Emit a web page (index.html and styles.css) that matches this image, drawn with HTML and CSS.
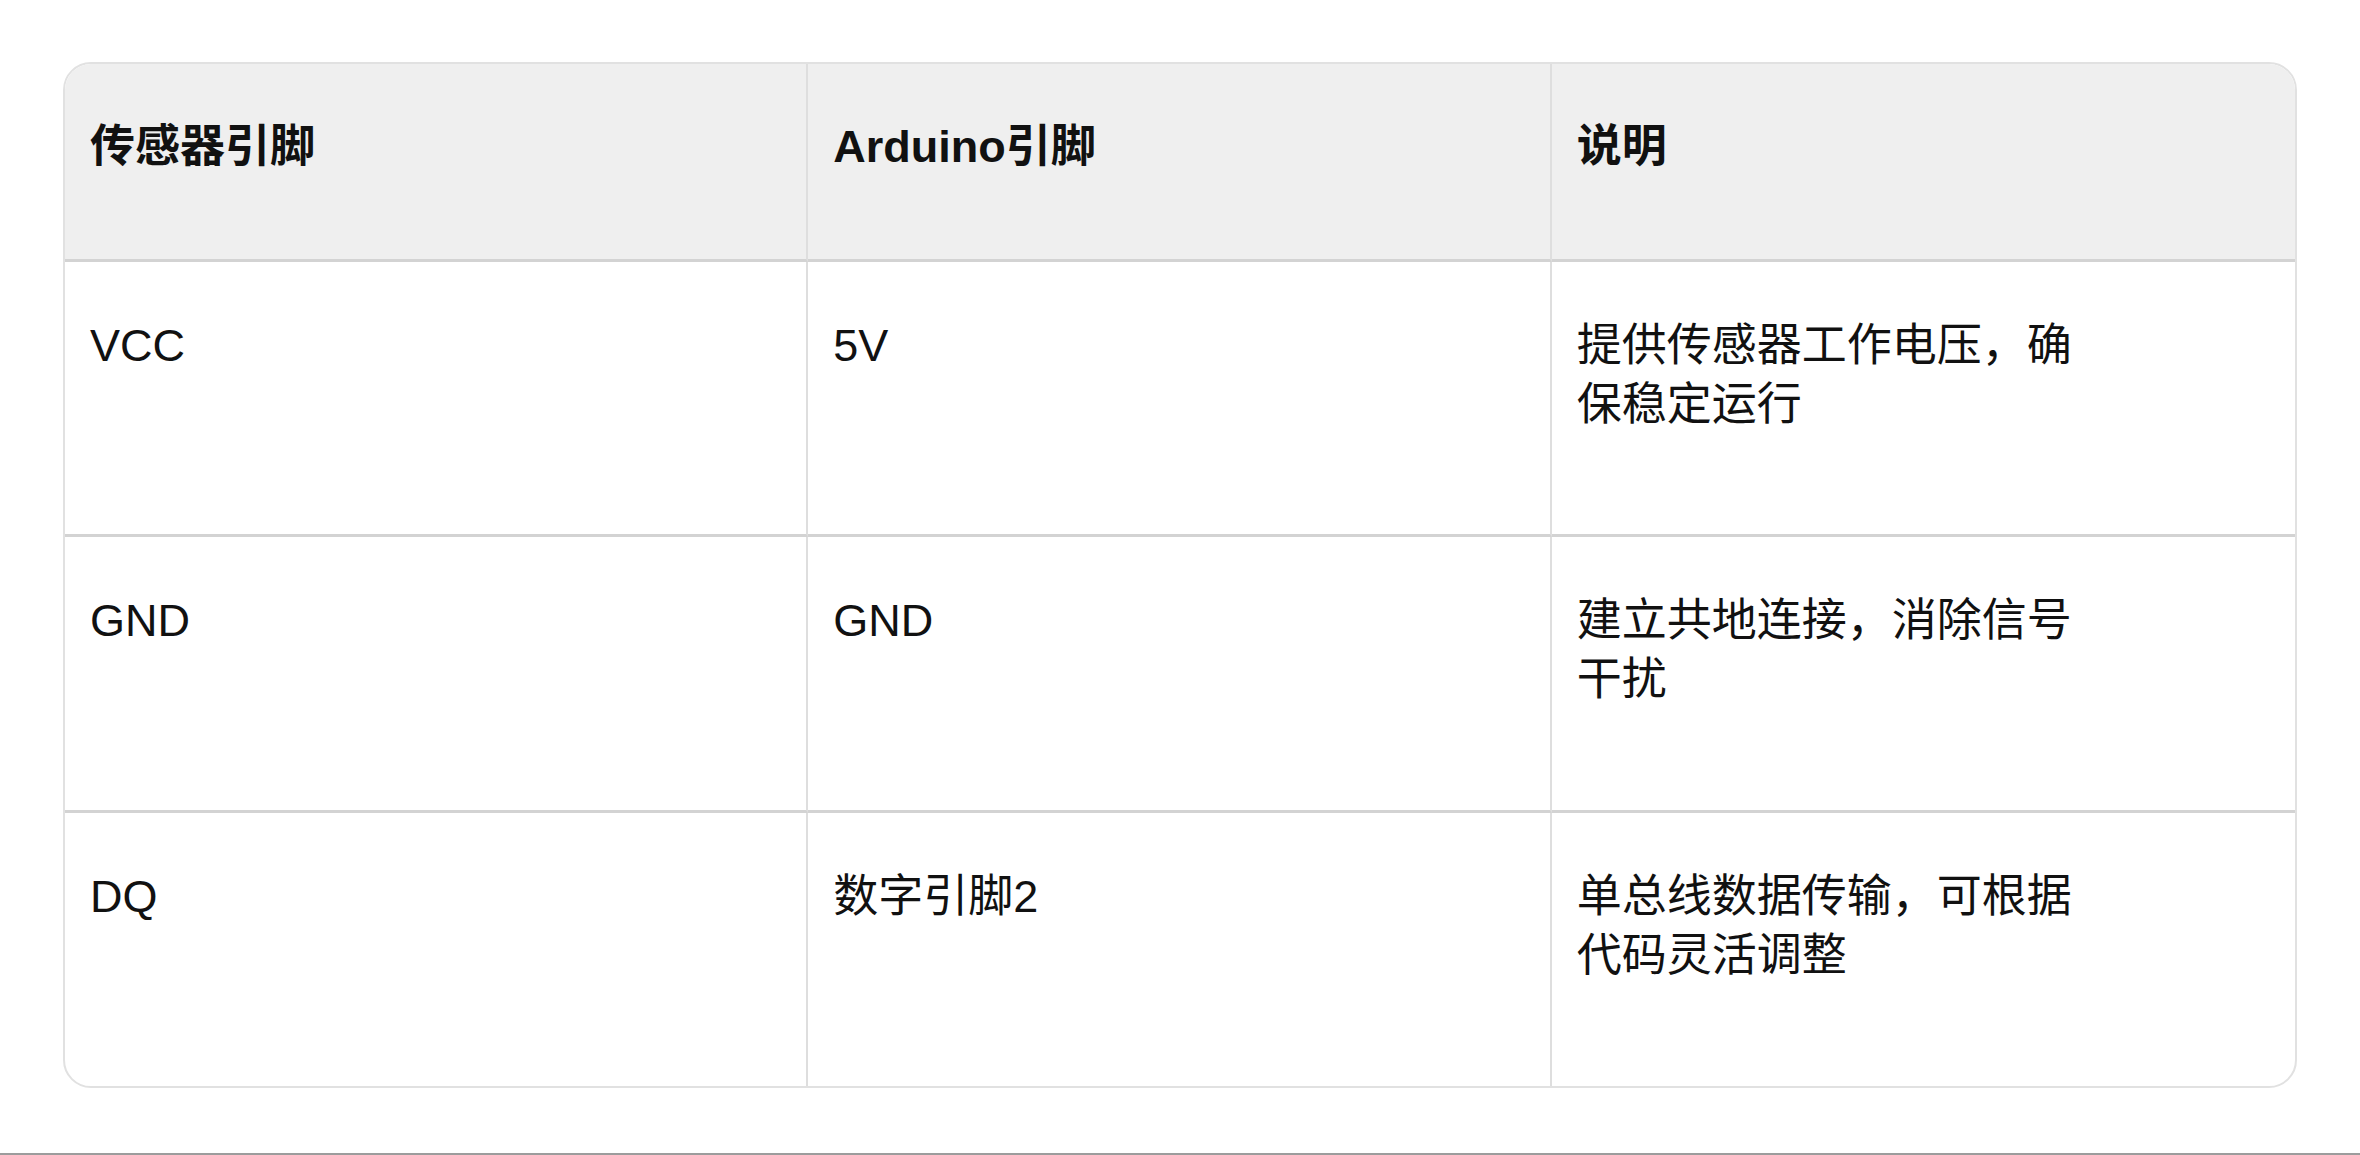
FILE: index.html
```html
<!DOCTYPE html>
<html lang="zh-CN">
<head>
<meta charset="utf-8">
<title>引脚连接</title>
<link rel="stylesheet" href="styles.css">
</head>
<body>
<div class="pin-table">
  <div class="cell head"><span class="txt">传感器引脚</span></div>
  <div class="cell head"><span class="txt">Arduino引脚</span></div>
  <div class="cell head last"><span class="txt">说明</span></div>

  <div class="cell r1"><span class="txt">VCC</span></div>
  <div class="cell r1"><span class="txt">5V</span></div>
  <div class="cell r1 last"><span class="txt">提供传感器工作电压，确保稳定运行</span></div>

  <div class="cell r2"><span class="txt">GND</span></div>
  <div class="cell r2"><span class="txt">GND</span></div>
  <div class="cell r2 last"><span class="txt">建立共地连接，消除信号干扰</span></div>

  <div class="cell r3"><span class="txt">DQ</span></div>
  <div class="cell r3"><span class="txt">数字引脚2</span></div>
  <div class="cell r3 last"><span class="txt">单总线数据传输，可根据代码灵活调整</span></div>
</div>
</body>
</html>
```
FILE: styles.css
```css
html, body {
  margin: 0;
  background: #ffffff;
}
body {
  min-height: 100vh;
  box-sizing: border-box;
  padding: 62px 63px 0;
  border-bottom: 2px solid #9c9c9c;
  font-family: "Liberation Sans", "Noto Sans CJK SC", sans-serif;
  color: #111111;
}
.pin-table {
  display: grid;
  grid-template-columns: repeat(3, 1fr);
  grid-template-rows: 198px 275px 276px 273px;
  border: 2px solid #e1e1e1;
  border-radius: 28px;
  overflow: hidden;
}
.cell {
  box-sizing: border-box;
  padding: 53px 25px 0;
  border-right: 2px solid #dedede;
  border-bottom: 3px solid #d3d3d3;
  font-size: 45px;
  line-height: 59px;
}
.cell.last {
  border-right: none;
}
.cell.r3 {
  border-bottom: none;
}
.cell.r1, .cell.r2, .cell.r3 {
  padding-top: 54px;
}
.head {
  background: #efefef;
  font-weight: 700;
}
.txt {
  display: block;
  max-width: 515px;
}
```
